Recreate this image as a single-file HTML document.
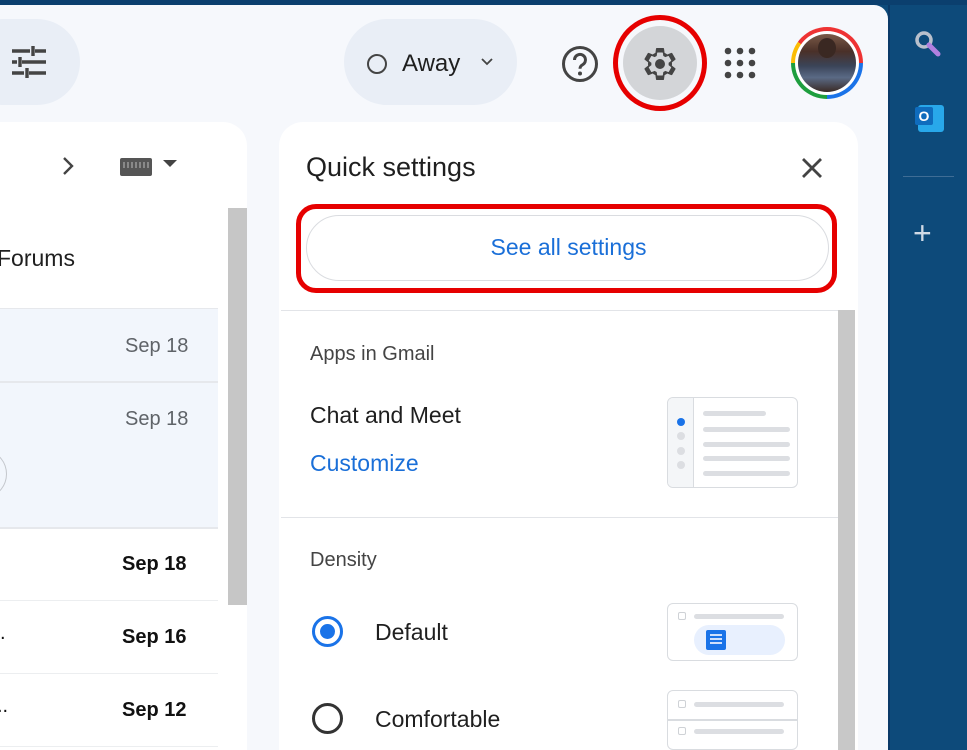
<!DOCTYPE html>
<html><head><meta charset="utf-8"><style>
*{margin:0;padding:0;box-sizing:border-box}
body{width:967px;height:750px;overflow:hidden;background:#0d4a7a;font-family:"Liberation Sans",Arial,sans-serif;position:relative}
.abs{position:absolute}
#main{left:0;top:5px;width:888px;height:745px;background:#f6f8fc;border-top-right-radius:14px}
.t{position:absolute;white-space:nowrap}
</style></head><body>
<div class="abs" style="left:0;top:0;width:967px;height:5px;background:#0b3f6e"></div>
<div id="main" class="abs"></div>
<div class="abs" style="left:888px;top:5px;width:2px;height:745px;background:#0a3a68"></div>

<div class="abs" style="left:-40px;top:19px;width:120px;height:86px;border-radius:43px;background:#e9eef6"></div>
<svg class="abs" style="left:11px;top:45px" width="36" height="34" viewBox="0 0 36 34"><g stroke="#444" stroke-width="3.4" fill="none"><path d="M1 6H19M24 6H35M22 1V11"/><path d="M1 17H6M11 17H35M9 12V22"/><path d="M1 28H13M18 28H35M16 23V33"/></g></svg>

<div class="abs" style="left:344px;top:19px;width:173px;height:86px;border-radius:43px;background:#e9eef6"></div>
<div class="abs" style="left:367px;top:54px;width:20px;height:20px;border-radius:50%;border:2.5px solid #444"></div>
<div class="t" style="left:402px;top:50px;font-size:24px;color:#1f1f1f">Away</div>
<svg class="abs" style="left:480px;top:57px" width="14" height="10"><path d="M2 2L7 7L12 2" stroke="#444" stroke-width="1.8" fill="none"/></svg>

<svg class="abs" style="left:561px;top:45px" width="38" height="38" viewBox="0 0 38 38"><circle cx="19" cy="19" r="16.5" stroke="#444" stroke-width="3" fill="none"/><path d="M13.5 15a5.5 5.5 0 1 1 8 4.8c-1.8 1-2.5 2-2.5 4" stroke="#444" stroke-width="3" fill="none"/><circle cx="19" cy="28.5" r="2" fill="#444"/></svg>

<div class="abs" style="left:613px;top:15px;width:94px;height:96px;border-radius:50%;border:5px solid #e60000"></div>
<div class="abs" style="left:623px;top:26px;width:74px;height:74px;border-radius:50%;background:#d3d5d8"></div>
<svg class="abs" style="left:640px;top:44px" width="40" height="40" viewBox="0 0 24 24"><path fill="#444" d="M19.14 12.94c.04-.3.06-.61.06-.94 0-.32-.02-.64-.07-.94l2.03-1.58a.49.49 0 0 0 .12-.61l-1.920-3.32a.488.488 0 0 0-.59-.22l-2.39.96c-.5-.38-1.03-.7-1.62-.94l-.36-2.54a.484.484 0 0 0-.48-.41h-3.84c-.24 0-.43.17-.47.41l-.36 2.54c-.59.24-1.13.57-1.62.94l-2.39-.96c-.22-.08-.47 0-.59.22L2.74 8.87c-.12.21-.08.47.12.61l2.03 1.58c-.05.3-.09.63-.09.94s.02.64.07.94l-2.03 1.58a.49.49 0 0 0-.12.61l1.92 3.32c.12.22.37.29.59.22l2.39-.96c.5.38 1.03.7 1.62.94l.36 2.54c.05.24.24.41.48.41h3.84c.24 0 .44-.17.47-.41l.36-2.540c.59-.24 1.13-.56 1.62-.94l2.39.96c.22.08.47 0 .59-.22l1.92-3.32c.12-.22.07-.47-.12-.61l-2.01-1.58z"/><path fill="#d3d5d8" transform="translate(12 12) scale(0.72) translate(-12 -12)" d="M19.14 12.94c.04-.3.06-.61.06-.94 0-.32-.02-.64-.07-.94l2.03-1.58a.49.49 0 0 0 .12-.61l-1.92-3.32a.488.488 0 0 0-.59-.22l-2.39.96c-.5-.38-1.03-.7-1.62-.94l-.36-2.54a.484.484 0 0 0-.48-.41h-3.84c-.24 0-.43.17-.47.41l-.36 2.54c-.59.24-1.13.57-1.62.94l-2.39-.96c-.22-.08-.47 0-.59.22L2.74 8.87c-.12.21-.08.47.12.61l2.03 1.58c-.05.3-.09.63-.09.94s.02.64.07.94l-2.03 1.58a.49.49 0 0 0-.12.61l1.92 3.32c.12.22.37.29.59.22l2.39-.96c.5.38 1.03.7 1.62.94l.36 2.54c.05.24.24.41.48.41h3.84c.24 0 .44-.17.47-.41l.36-2.54c.59-.24 1.130-.56 1.62-.94l2.39.96c.22.08.47 0 .59-.22l1.92-3.32c.12-.22.07-.47-.12-.61l-2.01-1.58z"/><circle cx="12" cy="12" r="3" fill="#444"/></svg>

<svg class="abs" style="left:724px;top:47px" width="32" height="32"><g fill="#444"><circle cx="4" cy="4" r="3.3"/><circle cx="16" cy="4" r="3.3"/><circle cx="28" cy="4" r="3.3"/><circle cx="4" cy="16" r="3.3"/><circle cx="16" cy="16" r="3.3"/><circle cx="28" cy="16" r="3.3"/><circle cx="4" cy="28" r="3.3"/><circle cx="16" cy="28" r="3.3"/><circle cx="28" cy="28" r="3.3"/></g></svg>

<div class="abs" style="left:791px;top:27px;width:72px;height:72px;border-radius:50%;background:conic-gradient(#e33 0 25%,#1a73e8 25% 50%,#1e9e3e 50% 75%,#fbbc04 75% 85%,#e33 85%)"></div>
<div class="abs" style="left:795px;top:31px;width:64px;height:64px;border-radius:50%;background:#fff"></div>
<div class="abs" style="left:798px;top:34px;width:58px;height:58px;border-radius:50%;background:linear-gradient(180deg,#7a5a48 0,#4a3028 30%,#3b4458 55%,#5a6a85 75%,#3a2a25 100%)"></div>
<div class="abs" style="left:818px;top:38px;width:18px;height:20px;border-radius:50%;background:#3a2822"></div>

<svg class="abs" style="left:913px;top:29px" width="30" height="30"><circle cx="11" cy="11" r="7" stroke="#b8c0cc" stroke-width="3.5" fill="none"/><path d="M16 16L25 25" stroke="#b080e0" stroke-width="5" stroke-linecap="round"/></svg>
<div class="abs" style="left:918px;top:105px;width:26px;height:27px;background:#28a8ea;border-radius:3px"></div>
<div class="abs" style="left:915px;top:107px;width:18px;height:18px;background:#0f6cbd;border-radius:2px;color:#fff;font-size:14px;font-weight:bold;text-align:center;line-height:18px">O</div>
<div class="abs" style="left:903px;top:176px;width:51px;height:1px;background:#3f6d95"></div>
<div class="t" style="left:913px;top:215px;font-size:32px;color:#d0dae6;font-weight:300">+</div>

<div class="abs" style="left:0;top:122px;width:247px;height:628px;background:#fff;border-top-right-radius:24px;overflow:hidden">
  <div class="t" style="left:-8px;top:29px;font-size:24px;color:#777">‹</div>
  <svg class="abs" style="left:61px;top:34px" width="14" height="20"><path d="M3 2L11 10L3 18" stroke="#444" stroke-width="2.4" fill="none"/></svg>
  <div class="abs" style="left:120px;top:36px;width:32px;height:18px;background:#555;border-radius:2px"></div>
  <div class="abs" style="left:123px;top:40px;width:26px;height:6px;background:repeating-linear-gradient(90deg,#888 0 2px,#555 2px 4px)"></div>
  <svg class="abs" style="left:163px;top:38px" width="14" height="8"><path d="M0 0H14L7 7Z" fill="#444"/></svg>
  <div class="t" style="left:-3px;top:123px;font-size:23px;color:#1f1f1f">Forums</div>
  <div class="abs" style="left:0;top:186px;width:218px;height:220px;background:#f2f6fc"></div>
  <div class="abs" style="left:0;top:186px;width:218px;height:1px;background:#e6e8ec"></div>
  <div class="abs" style="left:0;top:259px;width:218px;height:2px;background:#e6e8ec"></div>
  <div class="abs" style="left:0;top:405px;width:218px;height:2px;background:#e6e8ec"></div>
  <div class="abs" style="left:0;top:478px;width:218px;height:1px;background:#eceef0"></div>
  <div class="abs" style="left:0;top:551px;width:218px;height:1px;background:#eceef0"></div>
  <div class="abs" style="left:0;top:624px;width:218px;height:1px;background:#eceef0"></div>
  <div class="abs" style="left:-30px;top:330px;width:37px;height:44px;border-radius:50%;border:1.5px solid #c4c7cc"></div>
  <div class="t" style="left:125px;top:213px;font-size:20px;color:#5f6368">Sep 18</div>
  <div class="t" style="left:125px;top:286px;font-size:20px;color:#5f6368">Sep 18</div>
  <div class="t" style="left:122px;top:431px;font-size:20px;color:#111;font-weight:bold">Sep 18</div>
  <div class="t" style="left:122px;top:504px;font-size:20px;color:#111;font-weight:bold">Sep 16</div>
  <div class="t" style="left:122px;top:577px;font-size:20px;color:#111;font-weight:bold">Sep 12</div>
  <div class="t" style="left:0;top:500px;font-size:20px;color:#111">.</div>
  <div class="t" style="left:-3px;top:573px;font-size:20px;color:#111">..</div>
  <div class="abs" style="left:228px;top:86px;width:19px;height:397px;background:#c6c6c6"></div>
</div>

<div class="abs" style="left:279px;top:122px;width:579px;height:628px;background:#fff;border-top-left-radius:24px;border-top-right-radius:24px;overflow:hidden">
  <div class="t" style="left:27px;top:30px;font-size:27px;color:#1f1f1f">Quick settings</div>
  <svg class="abs" style="left:522px;top:35px" width="22" height="22"><path d="M2 2L20 20M20 2L2 20" stroke="#444" stroke-width="2.8"/></svg>
  <div class="abs" style="left:17px;top:82px;width:541px;height:89px;border-radius:20px;border:5px solid #e60000"></div>
  <div class="abs" style="left:27px;top:93px;width:523px;height:66px;border-radius:33px;border:1.5px solid #dadce0"></div>
  <div class="t" style="left:0;top:112px;width:579px;text-align:center;font-size:23px;color:#1a6fd8">See all settings</div>
  <div class="abs" style="left:2px;top:188px;width:557px;height:1px;background:#e2e4e8"></div>
  <div class="abs" style="left:2px;top:395px;width:557px;height:1px;background:#e2e4e8"></div>
  <div class="abs" style="left:559px;top:188px;width:17px;height:440px;background:#c8c8c8"></div>
  <div class="t" style="left:31px;top:221px;font-size:20px;color:#444">Apps in Gmail</div>
  <div class="t" style="left:31px;top:280px;font-size:23px;color:#1f1f1f">Chat and Meet</div>
  <div class="t" style="left:31px;top:328px;font-size:23px;color:#1a6fd8">Customize</div>
  <div class="abs" style="left:388px;top:275px;width:131px;height:91px;border:1.5px solid #d9dce0;border-radius:6px;overflow:hidden">
    <div class="abs" style="left:0;top:0;width:26px;height:91px;background:#f4f6f8;border-right:1.5px solid #d9dce0"></div>
    <div class="abs" style="left:9px;top:20px;width:8px;height:8px;border-radius:50%;background:#1a73e8"></div>
    <div class="abs" style="left:9px;top:34px;width:8px;height:8px;border-radius:50%;background:#dcdee2"></div>
    <div class="abs" style="left:9px;top:49px;width:8px;height:8px;border-radius:50%;background:#dcdee2"></div>
    <div class="abs" style="left:9px;top:63px;width:8px;height:8px;border-radius:50%;background:#dcdee2"></div>
    <div class="abs" style="left:35px;top:13px;width:63px;height:5px;border-radius:3px;background:#dcdee2"></div>
    <div class="abs" style="left:35px;top:29px;width:87px;height:5px;border-radius:3px;background:#dcdee2"></div>
    <div class="abs" style="left:35px;top:44px;width:87px;height:5px;border-radius:3px;background:#dcdee2"></div>
    <div class="abs" style="left:35px;top:58px;width:87px;height:5px;border-radius:3px;background:#dcdee2"></div>
    <div class="abs" style="left:35px;top:73px;width:87px;height:5px;border-radius:3px;background:#dcdee2"></div>
  </div>
  <div class="t" style="left:31px;top:427px;font-size:20px;color:#444">Density</div>
  <div class="abs" style="left:33px;top:494px;width:31px;height:31px;border-radius:50%;border:3px solid #1a73e8"></div>
  <div class="abs" style="left:41px;top:502px;width:15px;height:15px;border-radius:50%;background:#1a73e8"></div>
  <div class="t" style="left:96px;top:497px;font-size:23px;color:#1f1f1f">Default</div>
  <div class="abs" style="left:33px;top:581px;width:31px;height:31px;border-radius:50%;border:3px solid #333"></div>
  <div class="t" style="left:96px;top:584px;font-size:23px;color:#1f1f1f">Comfortable</div>
  <div class="abs" style="left:388px;top:481px;width:131px;height:58px;border:1.5px solid #d9dce0;border-radius:6px">
    <div class="abs" style="left:10px;top:8px;width:8px;height:8px;border:1.5px solid #cfd2d6;border-radius:2px"></div>
    <div class="abs" style="left:26px;top:10px;width:90px;height:5px;border-radius:3px;background:#dcdee2"></div>
    <div class="abs" style="left:26px;top:21px;width:91px;height:30px;border-radius:15px;background:#e8f0fe"></div>
    <div class="abs" style="left:38px;top:26px;width:20px;height:20px;border-radius:2px;background:#1a73e8"></div>
    <div class="abs" style="left:42px;top:30px;width:12px;height:2px;background:#cfe0fc;box-shadow:0 4px 0 #cfe0fc,0 8px 0 #cfe0fc"></div>
  </div>
  <div class="abs" style="left:388px;top:568px;width:131px;height:60px;border:1.5px solid #d9dce0;border-radius:6px">
    <div class="abs" style="left:10px;top:9px;width:8px;height:8px;border:1.5px solid #cfd2d6;border-radius:2px"></div>
    <div class="abs" style="left:26px;top:11px;width:90px;height:5px;border-radius:3px;background:#dcdee2"></div>
    <div class="abs" style="left:0;top:28px;width:129px;height:1.5px;background:#d9dce0"></div>
    <div class="abs" style="left:10px;top:36px;width:8px;height:8px;border:1.5px solid #cfd2d6;border-radius:2px"></div>
    <div class="abs" style="left:26px;top:38px;width:90px;height:5px;border-radius:3px;background:#dcdee2"></div>
  </div>
</div>
</body></html>
